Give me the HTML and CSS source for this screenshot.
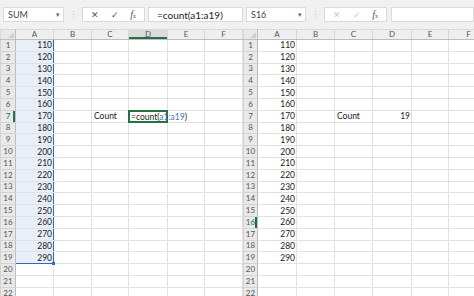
FILE: index.html
```html
<!DOCTYPE html>
<html lang="en">
<head>
    <meta charset="UTF-8">
    <title>COUNT function</title>
    <link rel="stylesheet" href="styles.css">
</head>
<body>
<div class="panes">

    <!-- editing the formula -->
    <div class="sheet left">
        <div class="fbar">
            <div class="namebox">SUM <span class="drop">&#9662;</span></div>
            <div class="dots">&#8942;</div>
            <div class="fnbox">
                <span class="fn-x">&#10005;</span>
                <span class="fn-ok">&#10003;</span>
                <span class="fn-fx"><i>f</i><small>x</small></span>
            </div>
            <div class="formula">=count(a1:a19)</div>
        </div>
        <table class="grid">
            <colgroup>
                <col class="c-h"><col class="c-a"><col class="c-b"><col class="c-c"><col class="c-d"><col class="c-e"><col class="c-f">
            </colgroup>
            <tr class="colhead"><th class="corner"><span></span></th><th>A</th><th>B</th><th>C</th><th class="active-col">D</th><th>E</th><th>F</th></tr>
            <tr><th>1</th><td class="num ref">110</td><td></td><td></td><td></td><td></td><td></td></tr>
            <tr><th>2</th><td class="num ref">120</td><td></td><td></td><td></td><td></td><td></td></tr>
            <tr><th>3</th><td class="num ref">130</td><td></td><td></td><td></td><td></td><td></td></tr>
            <tr><th>4</th><td class="num ref">140</td><td></td><td></td><td></td><td></td><td></td></tr>
            <tr><th>5</th><td class="num ref">150</td><td></td><td></td><td></td><td></td><td></td></tr>
            <tr><th>6</th><td class="num ref">160</td><td></td><td></td><td></td><td></td><td></td></tr>
            <tr><th class="active-row">7</th><td class="num ref">170</td><td></td><td>Count</td><td class="editing"><span class="cell-frame"></span><span class="edit-text">=count(<span class="refcol">a1:a19</span>)</span></td><td></td><td></td></tr>
            <tr><th>8</th><td class="num ref">180</td><td></td><td></td><td></td><td></td><td></td></tr>
            <tr><th>9</th><td class="num ref">190</td><td></td><td></td><td></td><td></td><td></td></tr>
            <tr><th>10</th><td class="num ref">200</td><td></td><td></td><td></td><td></td><td></td></tr>
            <tr><th>11</th><td class="num ref">210</td><td></td><td></td><td></td><td></td><td></td></tr>
            <tr><th>12</th><td class="num ref">220</td><td></td><td></td><td></td><td></td><td></td></tr>
            <tr><th>13</th><td class="num ref">230</td><td></td><td></td><td></td><td></td><td></td></tr>
            <tr><th>14</th><td class="num ref">240</td><td></td><td></td><td></td><td></td><td></td></tr>
            <tr><th>15</th><td class="num ref">250</td><td></td><td></td><td></td><td></td><td></td></tr>
            <tr><th>16</th><td class="num ref">260</td><td></td><td></td><td></td><td></td><td></td></tr>
            <tr><th>17</th><td class="num ref">270</td><td></td><td></td><td></td><td></td><td></td></tr>
            <tr><th>18</th><td class="num ref">280</td><td></td><td></td><td></td><td></td><td></td></tr>
            <tr><th>19</th><td class="num ref ref-end">290<span class="handle"></span></td><td></td><td></td><td></td><td></td><td></td></tr>
            <tr><th>20</th><td></td><td></td><td></td><td></td><td></td><td></td></tr>
            <tr><th>21</th><td></td><td></td><td></td><td></td><td></td><td></td></tr>
            <tr><th>22</th><td></td><td></td><td></td><td></td><td></td><td></td></tr>
        </table>
    </div>

    <!-- result -->
    <div class="sheet right">
        <div class="fbar">
            <div class="namebox">S16 <span class="drop">&#9662;</span></div>
            <div class="dots">&#8942;</div>
            <div class="fnbox">
                <span class="fn-x off">&#10005;</span>
                <span class="fn-ok off">&#10003;</span>
                <span class="fn-fx"><i>f</i><small>x</small></span>
            </div>
            <div class="formula"></div>
        </div>
        <table class="grid">
            <colgroup>
                <col class="c-h2"><col class="c-a2"><col class="c-b"><col class="c-c2"><col class="c-d"><col class="c-e"><col class="c-f2">
            </colgroup>
            <tr class="colhead"><th class="corner"><span></span></th><th>A</th><th>B</th><th>C</th><th>D</th><th>E</th><th>F</th></tr>
            <tr><th>1</th><td class="num">110</td><td></td><td></td><td></td><td></td><td></td></tr>
            <tr><th>2</th><td class="num">120</td><td></td><td></td><td></td><td></td><td></td></tr>
            <tr><th>3</th><td class="num">130</td><td></td><td></td><td></td><td></td><td></td></tr>
            <tr><th>4</th><td class="num">140</td><td></td><td></td><td></td><td></td><td></td></tr>
            <tr><th>5</th><td class="num">150</td><td></td><td></td><td></td><td></td><td></td></tr>
            <tr><th>6</th><td class="num">160</td><td></td><td></td><td></td><td></td><td></td></tr>
            <tr><th>7</th><td class="num">170</td><td></td><td>Count</td><td class="num">19</td><td></td><td></td></tr>
            <tr><th>8</th><td class="num">180</td><td></td><td></td><td></td><td></td><td></td></tr>
            <tr><th>9</th><td class="num">190</td><td></td><td></td><td></td><td></td><td></td></tr>
            <tr><th>10</th><td class="num">200</td><td></td><td></td><td></td><td></td><td></td></tr>
            <tr><th>11</th><td class="num">210</td><td></td><td></td><td></td><td></td><td></td></tr>
            <tr><th>12</th><td class="num">220</td><td></td><td></td><td></td><td></td><td></td></tr>
            <tr><th>13</th><td class="num">230</td><td></td><td></td><td></td><td></td><td></td></tr>
            <tr><th>14</th><td class="num">240</td><td></td><td></td><td></td><td></td><td></td></tr>
            <tr><th>15</th><td class="num">250</td><td></td><td></td><td></td><td></td><td></td></tr>
            <tr><th class="active-row">16</th><td class="num">260</td><td></td><td></td><td></td><td></td><td></td></tr>
            <tr><th>17</th><td class="num">270</td><td></td><td></td><td></td><td></td><td></td></tr>
            <tr><th>18</th><td class="num">280</td><td></td><td></td><td></td><td></td><td></td></tr>
            <tr><th>19</th><td class="num">290</td><td></td><td></td><td></td><td></td><td></td></tr>
            <tr><th>20</th><td></td><td></td><td></td><td></td><td></td><td></td></tr>
            <tr><th>21</th><td></td><td></td><td></td><td></td><td></td><td></td></tr>
            <tr><th>22</th><td></td><td></td><td></td><td></td><td></td><td></td></tr>
        </table>
    </div>

</div>
</body>
</html>
```

FILE: styles.css
```css
html, body {
    margin: 0;
    padding: 0;
    background: #fff;
    overflow: hidden;
}
body {
    font-family: Lato, "Open Sans", sans-serif;
    font-size: 8.5px;
    color: #222;
}
.panes {
    display: flex;
    width: 474px;
    height: 296px;
}
.sheet {
    overflow: hidden;
    flex: none;
}
.left {
    width: 243px;
}
.right {
    width: 231px;
}

/* formula bar */
.fbar {
    height: 29px;
    background: #f1f1f1;
    display: flex;
    align-items: flex-start;
    padding: 7px 0 0 3px;
    box-sizing: border-box;
}
.namebox, .fnbox, .formula {
    height: 15px;
    background: #fff;
    border: 1px solid #dadada;
    box-sizing: border-box;
    display: flex;
    align-items: center;
    color: #444;
}
.namebox {
    width: 61px;
    padding-left: 4px;
    justify-content: space-between;
    padding-right: 3px;
    font-size: 9px;
}
.right .namebox {
    width: 60px;
}
.drop {
    font-size: 7px;
    color: #666;
}
.dots {
    width: 18px;
    text-align: center;
    color: #c4c4c4;
    font-size: 9px;
    line-height: 15px;
}
.fnbox {
    width: 63px;
    justify-content: space-around;
    padding: 0 2px;
    color: #555;
}
.fn-x, .fn-ok {
    font-size: 9px;
}
.fn-x.off, .fn-ok.off {
    color: #c8c8c8;
}
.fn-fx {
    font-family: "Liberation Serif", serif;
    font-size: 10px;
}
.fn-fx small {
    font-size: 6px;
}
.formula {
    flex: 1;
    margin-left: 3px;
    padding-left: 8px;
    font-size: 10px;
    color: #222;
}
.right .formula {
    margin-left: 4px;
}

/* grid */
.grid {
    border-collapse: collapse;
    table-layout: fixed;
}
.left .grid {
    width: 242px;
}
.right .grid {
    width: 244px;
}
.c-h { width: 15px; }
.c-a { width: 38px; }
.c-b { width: 38px; }
.c-c { width: 37px; }
.c-d { width: 39px; }
.c-e { width: 37px; }
.c-f { width: 38px; }
.c-h2 { width: 14px; }
.c-a2 { width: 39px; }
.c-c2 { width: 38px; }
.c-f2 { width: 40px; }

.grid tr {
    height: 11.8px;
}
.grid .colhead {
    height: 10px;
}
.grid th {
    background: #efefef;
    color: #555;
    font-weight: normal;
    font-size: 8px;
    border: 1px solid #d4d4d4;
    padding: 0;
    line-height: 9px;
}
.grid .colhead th {
    border-color: #d8d8d8;
    border-bottom-color: #bdbdbd;
}
.grid tr th:first-child {
    text-align: center;
    border-right-color: #bdbdbd;
    background: #e9e9e9;
}
.grid .corner {
    position: relative;
}
.grid .corner span {
    position: absolute;
    right: 1px;
    bottom: 1px;
    border-left: 6px solid transparent;
    border-bottom: 6px solid #cfcfcf;
}
.grid td {
    border: 1px solid #e1e1e1;
    padding: 0 2px;
    white-space: nowrap;
    overflow: visible;
    line-height: 10px;
    color: #222;
}
.grid .num {
    text-align: right;
    padding-right: 1px;
}
.grid th.active-row {
    background: #d6d6d6;
    color: #217346;
    box-shadow: inset -2px 0 0 #217346;
}
.grid th.active-col {
    background: #dcdcdc;
    box-shadow: inset 0 -2px 0 #217346;
}

/* reference range A1:A19 */
.grid td.ref {
    background: #e9eff8;
    border-right: 1px solid #2d6cc0;
}
.grid td.ref-end {
    border-bottom: 1px solid #2d6cc0;
    position: relative;
}
.handle {
    position: absolute;
    right: -2px;
    bottom: -2px;
    width: 3px;
    height: 3px;
    background: #2d6cc0;
}

/* D7 being edited */
.grid td.editing {
    position: relative;
}
.cell-frame {
    position: absolute;
    left: -1px;
    top: -1px;
    right: -1px;
    bottom: -1px;
    border: 2px solid #217346;
}
.edit-text {
    position: absolute;
    z-index: 1;
    left: 2px;
    top: 1px;
    font-size: 8.5px;
}
.refcol {
    color: #4472c4;
}
```
